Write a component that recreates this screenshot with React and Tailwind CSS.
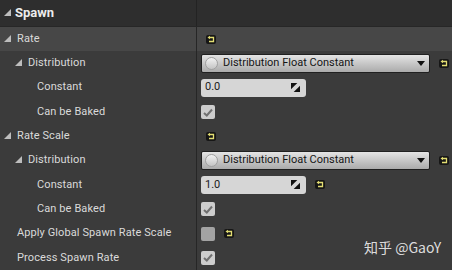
function Expander() {
  return (
    <svg width="7" height="7" viewBox="0 0 7 7" className="shrink-0">
      <path d="M7 0 V7 H0 Z" fill="#bdbdbd" />
    </svg>
  );
}

function ResetIcon() {
  return (
    <svg width="10" height="9" viewBox="0 0 10 9" className="shrink-0">
      <rect x="0" y="0" width="10" height="9" rx="2" fill="#161616" />
      <path d="M3.5 2.5 H7.5 V6.5 H3" fill="none" stroke="#e2dd72" strokeWidth="1.3" />
      <path d="M1.5 2.5 L4 0.8 V4.2 Z" fill="#e2dd72" />
    </svg>
  );
}

function Dropdown() {
  return (
    <div className="flex items-center w-[229px] h-[19px] rounded-[2px] border border-[#202020] bg-linear-to-b from-[#e4e4e4] to-[#ababab] pl-[3px] pr-[4px]">
      <span className="w-[13px] h-[13px] rounded-full border border-[#a0a0a0] bg-linear-to-b from-[#f2f2f2] to-[#c4c4c4]" />
      <span className="ml-[5px] text-[11px] text-[#151515] flex-1">Distribution Float Constant</span>
      <svg width="8" height="5" viewBox="0 0 8 5">
        <path d="M0 0 H8 L4 5 Z" fill="#111" />
      </svg>
    </div>
  );
}

function NumberBox({ value }) {
  return (
    <div className="flex items-center w-[105px] h-[18px] rounded-[3px] bg-[#d6d6d6] pl-[4px] pr-[6px]">
      <span className="flex-1 text-[11px] text-[#1a1a1a]">{value}</span>
      <svg width="9" height="9" viewBox="0 0 9 9">
        <path d="M0 0 H6.3 L0 6.3 Z" fill="#111" />
        <path d="M9 9 H2.7 L9 2.7 Z" fill="#111" />
      </svg>
    </div>
  );
}

function Check({ on }) {
  return (
    <div className="w-[14px] h-[14px] rounded-[2px] bg-[#cdcdcd] flex items-center justify-center">
      {on && (
        <svg width="10" height="9" viewBox="0 0 10 9">
          <path d="M1 5 L3.8 7.5 L9 1.5" fill="none" stroke="#707070" strokeWidth="2" />
        </svg>
      )}
    </div>
  );
}

function Row({ label, indent, expand, hot, children }) {
  return (
    <div className={`flex h-[24.3px] ${hot ? 'bg-[#474747]' : ''}`}>
      <div className="w-[197px] shrink-0 flex items-center border-r border-[#262626]" style={{ paddingLeft: indent }}>
        {expand && <span className="mr-[6px] -mt-[2px]"><Expander /></span>}
        <span className="text-[11px] tracking-[0.1px] text-[#dadada]">{label}</span>
      </div>
      <div className="flex-1 flex items-center gap-[9px] pl-[4px]">{children}</div>
    </div>
  );
}

export default function App() {
  return (
    <div className="relative w-[452px] h-[270px] overflow-hidden bg-[#3b3b3b] font-['Roboto',sans-serif]">
      <div className="flex h-[27px] bg-[#2e2e2e] border-b border-[#272727]">
        <div className="w-[197px] flex items-center pl-[4px] border-r border-[#232323]">
          <span className="mr-[4px] -mt-[2px]"><Expander /></span>
          <span className="text-[13px] font-bold text-[#ececec]">Spawn</span>
        </div>
      </div>

      <Row label="Rate" indent={4} expand hot>
        <span className="ml-[5px]"><ResetIcon /></span>
      </Row>
      <Row label="Distribution" indent={15} expand>
        <Dropdown />
        <ResetIcon />
      </Row>
      <Row label="Constant" indent={37}>
        <NumberBox value="0.0" />
      </Row>
      <Row label="Can be Baked" indent={37}>
        <Check on />
      </Row>
      <Row label="Rate Scale" indent={4} expand>
        <span className="ml-[5px]"><ResetIcon /></span>
      </Row>
      <Row label="Distribution" indent={15} expand>
        <Dropdown />
        <ResetIcon />
      </Row>
      <Row label="Constant" indent={37}>
        <NumberBox value="1.0" />
        <ResetIcon />
      </Row>
      <Row label="Can be Baked" indent={37}>
        <Check on />
      </Row>
      <Row label="Apply Global Spawn Rate Scale" indent={17}>
        <div className="w-[14px] h-[14px] rounded-[2px] bg-[#a3a3a3]" />
        <ResetIcon />
      </Row>
      <Row label="Process Spawn Rate" indent={17}>
        <Check on />
      </Row>

      <div className="absolute left-[364px] top-[237px] text-[14px] text-[#f2f2f2]/90 font-['Noto_Sans_CJK_SC',sans-serif]">
        知乎 @GaoY
      </div>
    </div>
  );
}
